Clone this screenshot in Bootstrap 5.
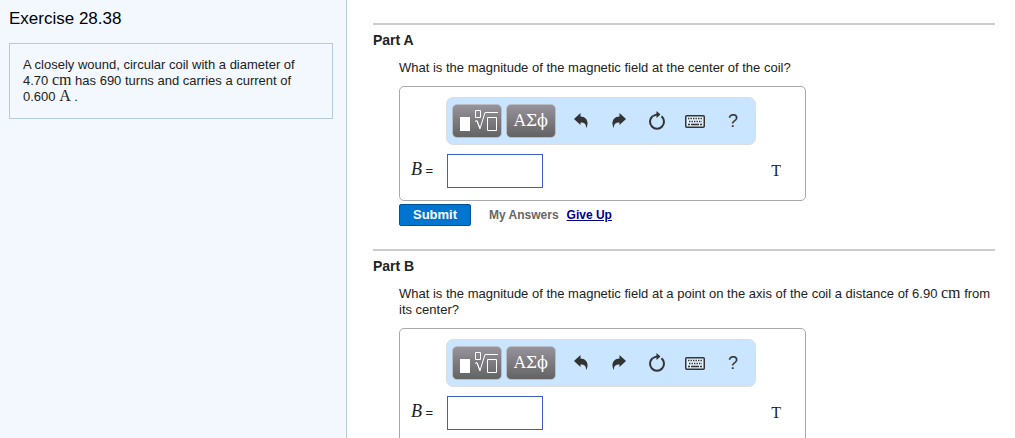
<!DOCTYPE html>
<html lang="en">
<head>
<meta charset="utf-8">
<meta name="viewport" content="width=device-width, initial-scale=1">
<title>Exercise 28.38</title>
<link href="https://cdn.jsdelivr.net/npm/bootstrap@5.3.0/dist/css/bootstrap.min.css" rel="stylesheet">
<style>
body { font-family: "Liberation Sans", Arial, sans-serif; font-size: 13px; line-height: 16px; color: #222; }
.unit { font-family: "Liberation Serif", "Times New Roman", serif; font-size: 16px; line-height: 0; }
.sidebar { flex: 0 0 347px; background: #f3f8ff; border-right: 1px solid #b5cbdd; padding: 9px 13px 0 9px; }
.sidebar h1 { font-size: 17px; line-height: 20px; margin: 0 0 14px; color: #000; }
.problem { border: 1px solid #b5cbdd; padding: 13px 24px 13px 13px; }
.content { min-width: 0; padding: 23px 20px 0 26px; overflow: auto; scrollbar-width: none; }
.part { border-top: 2px solid #ccc; padding-top: 7px; margin-bottom: 23px; }
.part h2 { font-size: 14px; line-height: 16px; font-weight: bold; margin: 0 0 12px; }
.part-body { margin-left: 26px; }
.answer { max-width: 407px; border: 1px solid #a9a9a9; border-radius: 5px; padding: 10px 20px 12px 11px; margin: 10px 0 3px; }
.tools { width: 310px; height: 48px; margin: 0 0 9px 35px; padding: 0 0 0 5px; background: #c9e5ff; border: 1px solid #ddd; border-radius: 7px; }
.palette { width: 50px; height: 34px; margin-right: 4px; border: 1px solid #b9bdc4; border-radius: 5px; color: #fff; background: linear-gradient(#96939b, #636363); font: 16px/1 "DejaVu Serif", serif; }
.tool { width: 38px; height: 34px; border: 0; background: none; color: #333; }
.palette + .tool { margin-left: 2px; }
.tool-help { font-size: 18px; }
.field-label { width: 36px; }
.field-label i { font-size: 18px; }
.value { width: 96px; height: 34px; border: 1px solid #3a5fcd; border-radius: 0; background: #fff; padding: 4px; }
.submit { width: 72px; height: 22px; padding: 0; margin-right: 18px; background: #0075d0; border: 1px solid #00539b; border-radius: 2px; color: #fff; font-weight: bold; font-size: 13px; line-height: 18px; }
.links { font-size: 12px; font-weight: bold; }
.links span { color: #666; margin-right: 8px; }
.links a { color: #00008b; }
</style>
</head>
<body>
<svg class="d-none" aria-hidden="true">
  <symbol id="i-root" viewBox="0 0 38 24">
    <path d="M0 8h10v14H0z" fill="#fff"/>
    <g fill="none" stroke="#fff"><path d="M15.5 1.500h5v7h-5zM27.500 8.500h9v13h-9z"/><path d="M15 12.500l2-1 3 8L25 3.500h13"/><path d="M17 12l3 8"/></g>
  </symbol>
  <symbol id="i-undo" viewBox="0 0 14 16"><path d="M0 6L6.500 0v3.500C11 3.500 14 7 13.500 11c-.2 2-1 3.500-1.500 4 .3-4-1.500-5.500-5.500-5.500V12z" fill="currentColor"/></symbol>
  <symbol id="i-redo" viewBox="0 0 14 16"><path d="M14 6L7.500 0v3.500C3 3.500 0 7 .5 11c.2 2 1 3.500 1.500 4-.3-4 1.500-5.500 5.500-5.500V12z" fill="currentColor"/></symbol>
  <symbol id="i-reset" viewBox="0 0 18 20"><path d="M4.500 5.300a7 7 0 1 0 9 0" fill="none" stroke="currentColor" stroke-width="2"/><path d="M8.500 0l4 3.500-4 3.500V4.500L5 6 4 4.500l4.500-2z" fill="currentColor"/></symbol>
  <symbol id="i-keys" viewBox="0 0 20 13">
    <rect x=".75" y=".75" width="18.500" height="11.500" rx="1" fill="#e5f2ff" stroke="currentColor" stroke-width="1.500"/>
    <path d="M3 3.500h14M4 6.500h13" stroke="currentColor" stroke-width="1.500" stroke-dasharray="1.400 1.100"/><path d="M3 9.500h2M6 9.500h8M15 9.500h2" stroke="currentColor" stroke-width="1.500"/>
  </symbol>
</svg>
<div class="d-flex vh-100">
  <aside class="sidebar">
    <h1>Exercise 28.38</h1>
    <div class="problem">A closely wound, circular coil with a diameter of 4.70 <span class="unit">cm</span> has 690 turns and carries a current of 0.600 <span class="unit">A</span> .</div>
  </aside>
  <main class="content flex-grow-1">
    <section class="part">
      <h2>Part A</h2>
      <div class="part-body">
        <p class="m-0">What is the magnitude of the magnetic field at the center of the coil?</p>
        <div class="answer">
          <div class="tools d-flex align-items-center">
            <button type="button" class="palette d-flex align-items-center justify-content-center p-0 ps-1" aria-label="Templates"><svg width="38" height="24"><use href="#i-root"/></svg></button>
            <button type="button" class="palette p-0">ΑΣϕ</button>
            <button type="button" class="tool p-0" aria-label="Undo"><svg width="14" height="16"><use href="#i-undo"/></svg></button>
            <button type="button" class="tool p-0" aria-label="Redo"><svg width="14" height="16"><use href="#i-redo"/></svg></button>
            <button type="button" class="tool p-0" aria-label="Reset"><svg width="18" height="20"><use href="#i-reset"/></svg></button>
            <button type="button" class="tool p-0" aria-label="Keyboard shortcuts"><svg width="20" height="13"><use href="#i-keys"/></svg></button>
            <button type="button" class="tool tool-help p-0">?</button>
          </div>
          <div class="d-flex align-items-center">
            <label class="field-label" for="b-a"><i class="unit">B</i> =</label>
            <input class="value" id="b-a" type="text">
            <span class="unit ms-auto me-1">T</span>
          </div>
        </div>
        <div class="d-flex align-items-center">
          <button type="submit" class="submit">Submit</button>
          <div class="links"><span>My Answers</span><a href="#">Give Up</a></div>
        </div>
      </div>
    </section>
    <section class="part">
      <h2>Part B</h2>
      <div class="part-body">
        <p class="m-0">What is the magnitude of the magnetic field at a point on the axis of the coil a distance of 6.90 <span class="unit">cm</span> from its center?</p>
        <div class="answer">
          <div class="tools d-flex align-items-center">
            <button type="button" class="palette d-flex align-items-center justify-content-center p-0 ps-1" aria-label="Templates"><svg width="38" height="24"><use href="#i-root"/></svg></button>
            <button type="button" class="palette p-0">ΑΣϕ</button>
            <button type="button" class="tool p-0" aria-label="Undo"><svg width="14" height="16"><use href="#i-undo"/></svg></button>
            <button type="button" class="tool p-0" aria-label="Redo"><svg width="14" height="16"><use href="#i-redo"/></svg></button>
            <button type="button" class="tool p-0" aria-label="Reset"><svg width="18" height="20"><use href="#i-reset"/></svg></button>
            <button type="button" class="tool p-0" aria-label="Keyboard shortcuts"><svg width="20" height="13"><use href="#i-keys"/></svg></button>
            <button type="button" class="tool tool-help p-0">?</button>
          </div>
          <div class="d-flex align-items-center">
            <label class="field-label" for="b-b"><i class="unit">B</i> =</label>
            <input class="value" id="b-b" type="text">
            <span class="unit ms-auto me-1">T</span>
          </div>
        </div>
      </div>
    </section>
  </main>
</div>
<script src="https://cdn.jsdelivr.net/npm/bootstrap@5.3.0/dist/js/bootstrap.bundle.min.js"></script>
</body>
</html>
